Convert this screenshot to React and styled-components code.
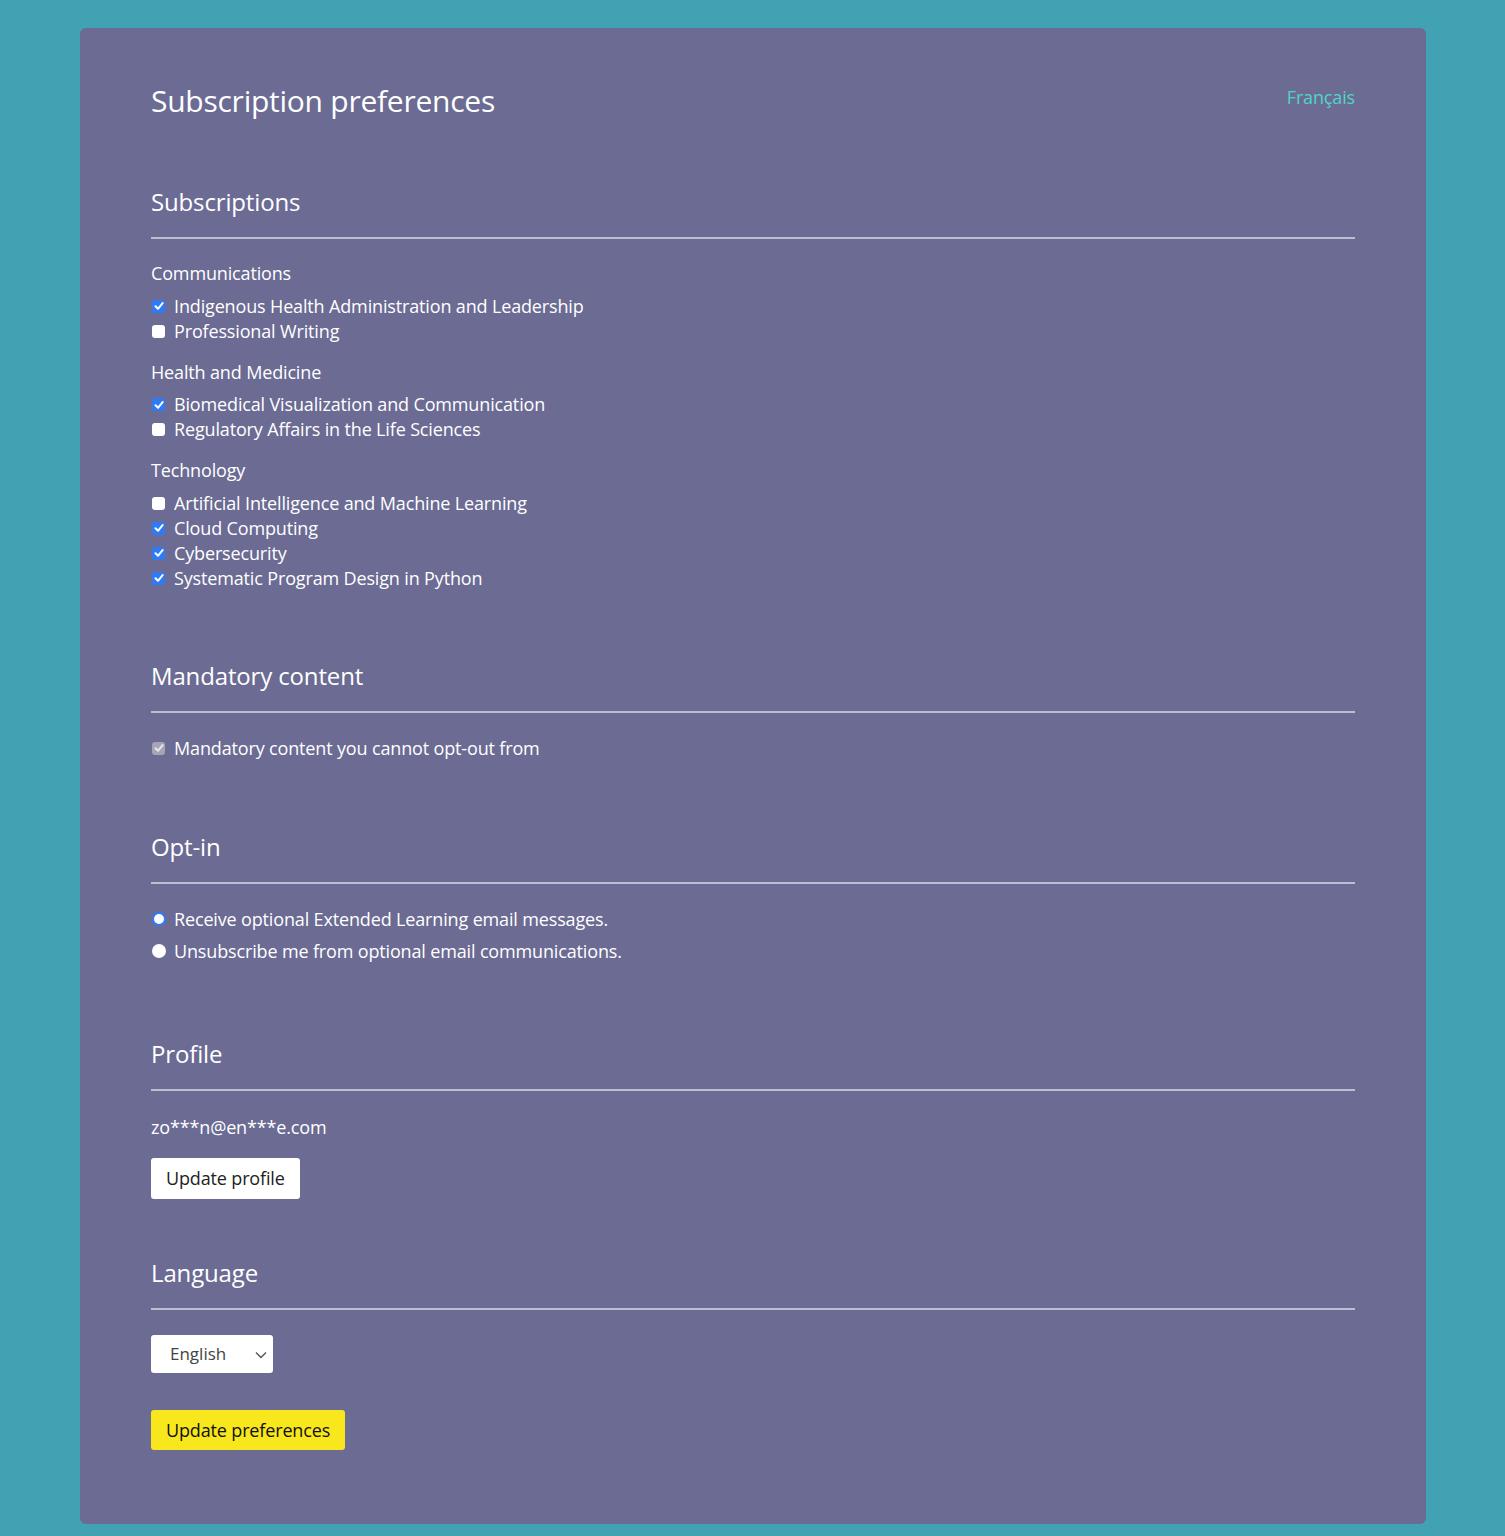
import React, { useState } from "react";
import styled, { createGlobalStyle } from "styled-components";

const groups = [
  {
    name: "Communications",
    items: [
      { id: "ihal", label: "Indigenous Health Administration and Leadership", checked: true },
      { id: "pw", label: "Professional Writing", checked: false },
    ],
  },
  {
    name: "Health and Medicine",
    items: [
      { id: "bvc", label: "Biomedical Visualization and Communication", checked: true },
      { id: "ra", label: "Regulatory Affairs in the Life Sciences", checked: false },
    ],
  },
  {
    name: "Technology",
    items: [
      { id: "aiml", label: "Artificial Intelligence and Machine Learning", checked: false },
      { id: "cc", label: "Cloud Computing", checked: true },
      { id: "cs", label: "Cybersecurity", checked: true },
      { id: "spd", label: "Systematic Program Design in Python", checked: true },
    ],
  },
];

const CheckMark = ({ color }) => (
  <svg width="10" height="10" viewBox="0 0 10 10">
    <path d="M1.5 5.3 L4 7.8 L8.6 2.1" fill="none" stroke={color} strokeWidth="2" strokeLinecap="round" strokeLinejoin="round" />
  </svg>
);

const Checkbox = ({ id, label, checked, disabled, onChange }) => (
  <Option htmlFor={id}>
    <HiddenInput type="checkbox" id={id} checked={checked} disabled={disabled} onChange={onChange} />
    <Box $checked={checked} $disabled={disabled}>
      {checked && <CheckMark color={disabled ? "#e6e6ea" : "#fff"} />}
    </Box>
    {label}
  </Option>
);

const Radio = ({ id, label, checked, onChange }) => (
  <RadioOption htmlFor={id}>
    <HiddenInput type="radio" name="optin" id={id} checked={checked} onChange={onChange} />
    <Dot $checked={checked} />
    {label}
  </RadioOption>
);

const App = () => {
  const [subs, setSubs] = useState(() => {
    const s = {};
    groups.forEach((g) => g.items.forEach((i) => (s[i.id] = i.checked)));
    return s;
  });
  const [optin, setOptin] = useState("receive");

  const toggle = (id) => setSubs({ ...subs, [id]: !subs[id] });

  return (
    <>
      <GlobalStyle />
      <Card>
        <Header>
          <PageTitle>Subscription preferences</PageTitle>
          <LangLink href="#">Français</LangLink>
        </Header>

        <Section $gap={68}>
          <SectionTitle>Subscriptions</SectionTitle>
          <Content $bottom={10}>
            {groups.map((g) => (
              <Group key={g.name}>
                <GroupName>{g.name}</GroupName>
                {g.items.map((i) => (
                  <Checkbox key={i.id} id={i.id} label={i.label} checked={subs[i.id]} onChange={() => toggle(i.id)} />
                ))}
              </Group>
            ))}
          </Content>
        </Section>

        <Section $gap={60}>
          <SectionTitle>Mandatory content</SectionTitle>
          <Content $top={23} $bottom={10}>
            <Checkbox id="mandatory" label="Mandatory content you cannot opt-out from" checked disabled />
          </Content>
        </Section>

        <Section $gap={61}>
          <SectionTitle>Opt-in</SectionTitle>
          <Content $top={23} $bottom={15}>
            <Radio id="receive" label="Receive optional Extended Learning email messages." checked={optin === "receive"} onChange={() => setOptin("receive")} />
            <Radio id="unsub" label="Unsubscribe me from optional email communications." checked={optin === "unsub"} onChange={() => setOptin("unsub")} />
          </Content>
        </Section>

        <Section $gap={60}>
          <SectionTitle>Profile</SectionTitle>
          <Content $top={24}>
            <Email>zo***n@en***e.com</Email>
            <WhiteButton>Update profile</WhiteButton>
          </Content>
        </Section>

        <Section $gap={59}>
          <SectionTitle>Language</SectionTitle>
          <Content $top={25}>
            <SelectWrap>
              <Select defaultValue="en">
                <option value="en">English</option>
                <option value="fr">Français</option>
              </Select>
              <Chevron width="12" height="8" viewBox="0 0 12 8">
                <path d="M1 1.5 L6 6.5 L11 1.5" fill="none" stroke="#555" strokeWidth="1.4" />
              </Chevron>
            </SelectWrap>
            <YellowButton>Update preferences</YellowButton>
          </Content>
        </Section>
      </Card>
    </>
  );
};

const GlobalStyle = createGlobalStyle`
  body {
    margin: 0;
    background: #41a2b3;
    font-family: "Open Sans", "Noto Sans", sans-serif;
    color: #fff;
    letter-spacing: -0.15px;
  }
`;

const Card = styled.div`
  margin: 28px 79px 12px 80px;
  background: #6b6b93;
  border-radius: 6px;
  padding: 55px 71px 74px 71px;
`;

const Header = styled.div`
  display: flex;
  justify-content: space-between;
  align-items: flex-start;
`;

const PageTitle = styled.h1`
  margin: 0;
  font-size: 30px;
  font-weight: 400;
  line-height: 36px;
  letter-spacing: -0.25px;
`;

const LangLink = styled.a`
  color: #4fd6c2;
  text-decoration: none;
  font-size: 18px;
  line-height: 25px;
  margin-top: 2px;
`;

const Section = styled.section`
  margin-top: ${(p) => p.$gap}px;
`;

const SectionTitle = styled.h2`
  margin: 0;
  font-size: 24px;
  font-weight: 400;
  line-height: 29px;
  padding-bottom: 21px;
  border-bottom: 2px solid #bdbdd0;
`;

const Content = styled.div`
  padding-top: ${(p) => p.$top || 0}px;
  padding-bottom: ${(p) => p.$bottom || 0}px;
`;

const Group = styled.div`
  padding-top: 22px;
  & + & {
    padding-top: 16px;
  }
`;

const GroupName = styled.div`
  font-size: 18px;
  line-height: 25px;
  margin-bottom: 7.5px;
`;

const Option = styled.label`
  display: flex;
  align-items: center;
  font-size: 18px;
  line-height: 25px;
  cursor: pointer;
`;

const RadioOption = styled(Option)`
  & + & {
    margin-top: 7px;
  }
`;

const HiddenInput = styled.input`
  position: absolute;
  opacity: 0;
  width: 0;
  height: 0;
  margin: 0;
`;

const Box = styled.span`
  width: 13px;
  height: 13px;
  margin: 0 9px 0 1px;
  border-radius: 3px;
  display: flex;
  align-items: center;
  justify-content: center;
  flex-shrink: 0;
  background: ${(p) => (p.$disabled ? "#a5a5b5" : p.$checked ? "#2f7bf5" : "#fff")};
`;

const Dot = styled.span`
  width: 14px;
  height: 14px;
  margin: 0 8px 0 1px;
  border-radius: 50%;
  box-sizing: border-box;
  flex-shrink: 0;
  background: #fff;
  border: ${(p) => (p.$checked ? "2.5px solid #2f7bf5" : "none")};
`;

const Email = styled.div`
  font-size: 18px;
  line-height: 25px;
`;

const WhiteButton = styled.button`
  display: block;
  margin-top: 18px;
  height: 41px;
  padding: 0 15px;
  background: #fff;
  border: none;
  border-radius: 3px;
  font-family: inherit;
  font-size: 18px;
  letter-spacing: -0.15px;
  color: #222;
  cursor: pointer;
`;

const SelectWrap = styled.div`
  position: relative;
  width: 122px;
  height: 38px;
`;

const Select = styled.select`
  appearance: none;
  width: 100%;
  height: 100%;
  background: #fff;
  border: none;
  border-radius: 3px;
  padding: 0 0 0 19px;
  font-family: inherit;
  font-size: 17px;
  color: #444;
`;

const Chevron = styled.svg`
  position: absolute;
  right: 6px;
  top: 16px;
  pointer-events: none;
`;

const YellowButton = styled(WhiteButton)`
  margin-top: 37px;
  height: 40px;
  background: #f8e71c;
  color: #111;
  padding: 0 15px;
`;

export default App;
